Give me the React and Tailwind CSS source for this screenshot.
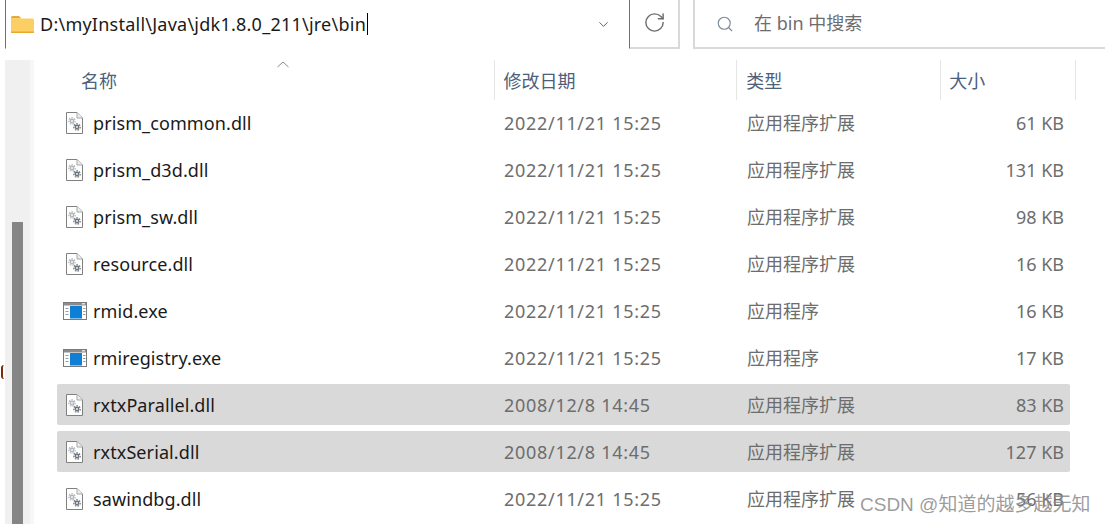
import React from "react";
import { ChevronDown, RotateCw, Search } from "lucide-react";

const files = [
  { name: "prism_common.dll", date: "2022/11/21 15:25", type: "应用程序扩展", size: "61 KB" },
  { name: "prism_d3d.dll", date: "2022/11/21 15:25", type: "应用程序扩展", size: "131 KB" },
  { name: "prism_sw.dll", date: "2022/11/21 15:25", type: "应用程序扩展", size: "98 KB" },
  { name: "resource.dll", date: "2022/11/21 15:25", type: "应用程序扩展", size: "16 KB" },
  { name: "rmid.exe", date: "2022/11/21 15:25", type: "应用程序", size: "16 KB", exe: true },
  { name: "rmiregistry.exe", date: "2022/11/21 15:25", type: "应用程序", size: "17 KB", exe: true },
  { name: "rxtxParallel.dll", date: "2008/12/8 14:45", type: "应用程序扩展", size: "83 KB", selected: true },
  { name: "rxtxSerial.dll", date: "2008/12/8 14:45", type: "应用程序扩展", size: "127 KB", selected: true },
  { name: "sawindbg.dll", date: "2022/11/21 15:25", type: "应用程序扩展", size: "56 KB" },
];

const font = "font-['Noto_Sans','Noto_Sans_CJK_SC',sans-serif]";

function Gear({ cx, cy, color }) {
  return (
    <g>
      <circle cx={cx} cy={cy} r="3.2" fill="none" stroke={color} strokeWidth="1.2" strokeDasharray="1.6 1.2" />
      <circle cx={cx} cy={cy} r="2.4" fill={color} />
      <circle cx={cx} cy={cy} r="0.9" fill="#fff" />
    </g>
  );
}

function DllIcon() {
  return (
    <svg width="17" height="22" viewBox="0 0 17 22" className="shrink-0">
      <path d="M0.5 0.5H11L16.5 6V21.5H0.5Z" fill="#fff" stroke="#808080" />
      <path d="M11 0.5V6H16.5" fill="#eeeeee" stroke="#a6a6a6" />
      <Gear cx={6} cy={9} color="#b0b6bd" />
      <Gear cx={11} cy={15} color="#6a7178" />
    </svg>
  );
}

function ExeIcon() {
  return (
    <svg width="24" height="18" viewBox="0 0 24 18" className="shrink-0">
      <rect x="0.5" y="0.5" width="23" height="17" fill="#fff" stroke="#7a7a7a" />
      <rect x="1" y="1" width="22" height="2.5" fill="#8c8c8c" />
      <rect x="19" y="1" width="3" height="1.5" fill="#e0e0e0" />
      <rect x="7" y="4" width="12" height="12.5" fill="#0f7fd6" />
      <path d="M2.5 6.5H5.5M2.5 9.5H5.5M2.5 12.5H5.5M20 6.5H22.5M20 9.5H22.5M20 12.5H22.5" stroke="#9a9a9a" />
    </svg>
  );
}

function FileRow({ file }) {
  return (
    <div
      className={`grid grid-cols-[447px_243px_1fr_auto] items-center h-[41px] pt-px pr-[6px] rounded-[2px] text-[18px] text-[#6d6d6d] ${
        file.selected ? "bg-[#d9d9d9]" : ""
      }`}
    >
      <div className={`flex items-center text-[#1a1a1a] ${file.exe ? "pl-[6px] gap-[7px]" : "pl-[9px] gap-[11px]"}`}>
        {file.exe ? <ExeIcon /> : <DllIcon />}
        <span className="-ml-px tracking-[0.1px]">{file.name}</span>
      </div>
      <span className="tracking-[0.7px]">{file.date}</span>
      <span>{file.type}</span>
      <span>{file.size}</span>
    </div>
  );
}

function HeaderCell({ className, children }) {
  return (
    <div className={`h-[40px] flex items-center pt-[2px] border-r border-[#e5e5e5] ${className}`}>
      {children}
    </div>
  );
}

export default function App() {
  return (
    <div className={`relative w-[1105px] h-[524px] overflow-hidden bg-white ${font}`}>
      {/* Address bar */}
      <div className="flex h-[49px]">
        <div className="ml-[5px] w-[625px] flex items-center border-x border-x-[#2f7fc9] border-b border-b-transparent pl-[5px] pr-[18px]">
          <svg width="23" height="18" viewBox="0 0 23 18" className="shrink-0">
            <path d="M0 2.5A1.5 1.5 0 0 1 1.5 1H8L10.5 3.5H0Z" fill="#e8a92e" />
            <path d="M0 3.5H21.5A1.5 1.5 0 0 1 23 5V16.5A1.5 1.5 0 0 1 21.5 18H1.5A1.5 1.5 0 0 1 0 16.5Z" fill="#fbcf64" />
            <rect x="0" y="16.5" width="23" height="1.5" fill="#e8a92e" />
          </svg>
          <span className="ml-[6px] text-[18px] leading-none tracking-[0.24px] text-[#1a1a1a] border-r border-black pr-px py-[2px]">
            D:\myInstall\Java\jdk1.8.0_211\jre\bin
          </span>
          <ChevronDown className="ml-auto text-[#555]" size={15} strokeWidth={1.5} />
        </div>
        <div className="w-[50px] flex items-center justify-center pb-[3px] border-r-2 border-b-2 border-[#d9d9d9]">
          <RotateCw className="text-[#6d6d6d]" size={23} strokeWidth={1.5} />
        </div>
        <div className="ml-[13px] flex-1 flex items-center border-l-2 border-b-2 border-[#d9d9d9] pl-[21px] text-[18px] text-[#6d6d6d]">
          <Search className="text-[#7a8a9a]" size={18} strokeWidth={1.5} />
          <span className="ml-[20px]">在 bin 中搜索</span>
        </div>
      </div>

      <div className="flex mt-[11px]">
        {/* Scrollbar */}
        <div className="ml-[5px] w-[25px] h-[464px] bg-[#f0f0f0] flex flex-col justify-end px-[7px]">
          <div className="h-[302px] bg-[#858585]" />
        </div>
        <div className="w-[4px] bg-[#f7f7f7]" />

        {/* File list */}
        <div className="ml-[23px] w-[1019px]">
          <div className="relative flex text-[18px] text-[#4c607a]">
            <HeaderCell className="w-[438px] pl-[24px]">名称</HeaderCell>
            <HeaderCell className="w-[243px] pl-[9px]">修改日期</HeaderCell>
            <HeaderCell className="w-[204px] pl-[9px]">类型</HeaderCell>
            <HeaderCell className="w-[135px] pl-[8px]">大小</HeaderCell>
            <svg width="12" height="7" viewBox="0 0 12 7" className="absolute left-[220px] top-[1px]">
              <path d="M0.5 6L6 1L11.5 6" fill="none" stroke="#8a8a8a" />
            </svg>
          </div>
          <div className="mt-[2px] w-[1013px] flex flex-col gap-[6px]">
            {files.map((file) => (
              <FileRow key={file.name} file={file} />
            ))}
          </div>
        </div>
      </div>

      {/* Watermark */}
      <div className="absolute left-[860px] top-[491px] text-[19px] leading-[28px] font-['Liberation_Sans','Noto_Sans_CJK_SC',sans-serif] text-[#8a8a8a]/85 whitespace-nowrap">
        CSDN @知道的越多越无知
      </div>
      <div className="absolute left-[1px] top-[365px] w-[3px] h-[14px] border-l-2 border-[#7a2a10] rounded-l-full" />
    </div>
  );
}
